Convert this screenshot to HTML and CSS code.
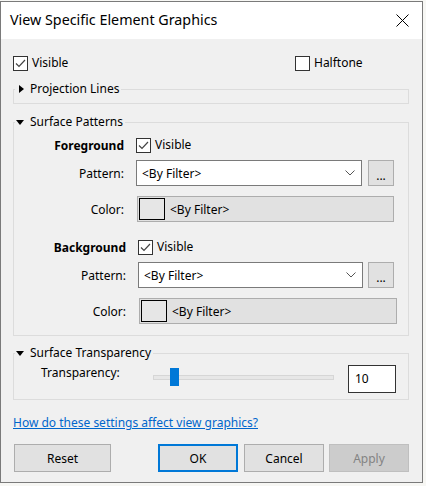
FILE: index.html
```html
<!DOCTYPE html>
<html>
<head>
<meta charset="utf-8">
<link rel="stylesheet" href="styles.css">
</head>
<body>
<div class="dialog">
  <div class="titlebar">
    <span class="title">View Specific Element Graphics</span>
    <svg class="close" width="13" height="13" viewBox="0 0 13 13"><path d="M0.5 0.5 L12.5 12.5 M12.5 0.5 L0.5 12.5" stroke="#000" stroke-width="1" fill="none"/></svg>
  </div>
  <div class="content">
    <div class="toprow">
      <label class="check"><span class="box"><svg width="13" height="13" viewBox="0 0 13 13"><path d="M2 6.5 L5 9.5 L11 3" stroke="#444" stroke-width="1.2" fill="none"/></svg></span>Visible</label>
      <label class="check"><span class="box"></span>Halftone</label>
    </div>

    <fieldset class="group collapsed">
      <legend><span class="tri"><span class="tri-right"></span></span>Projection Lines</legend>
    </fieldset>

    <fieldset class="group patterns">
      <legend><span class="tri"><span class="tri-down"></span></span>Surface Patterns</legend>
      <div class="section">
        <div class="row head">
          <span class="lbl bold">Foreground</span>
          <label class="check"><span class="box"><svg width="13" height="13" viewBox="0 0 13 13"><path d="M2 6.5 L5 9.5 L11 3" stroke="#444" stroke-width="1.2" fill="none"/></svg></span>Visible</label>
        </div>
        <div class="row pat">
          <span class="lbl">Pattern:</span>
          <div class="combo"><span>&lt;By Filter&gt;</span><svg width="10" height="6" viewBox="0 0 10 6"><path d="M0.5 0.5 L5 5 L9.5 0.5" stroke="#555" stroke-width="1" fill="none"/></svg></div>
          <button class="more">...</button>
        </div>
        <div class="row col">
          <span class="lbl">Color:</span>
          <div class="colorfield"><span class="swatch"></span><span>&lt;By Filter&gt;</span></div>
        </div>
      </div>
      <div class="section bgsec">
        <div class="row head">
          <span class="lbl bold">Background</span>
          <label class="check"><span class="box"><svg width="13" height="13" viewBox="0 0 13 13"><path d="M2 6.5 L5 9.5 L11 3" stroke="#444" stroke-width="1.2" fill="none"/></svg></span>Visible</label>
        </div>
        <div class="row pat">
          <span class="lbl">Pattern:</span>
          <div class="combo"><span>&lt;By Filter&gt;</span><svg width="10" height="6" viewBox="0 0 10 6"><path d="M0.5 0.5 L5 5 L9.5 0.5" stroke="#555" stroke-width="1" fill="none"/></svg></div>
          <button class="more">...</button>
        </div>
        <div class="row col">
          <span class="lbl">Color:</span>
          <div class="colorfield"><span class="swatch"></span><span>&lt;By Filter&gt;</span></div>
        </div>
      </div>
    </fieldset>

    <fieldset class="group trans">
      <legend><span class="tri"><span class="tri-down"></span></span>Surface Transparency</legend>
      <div class="transrow">
        <span class="tlbl">Transparency:</span>
        <div class="slider"><div class="track"></div><div class="thumb"></div></div>
        <div class="num">10</div>
      </div>
    </fieldset>

    <a class="help" href="#">How do these settings affect view graphics?</a>

    <div class="buttons">
      <button class="btn reset">Reset</button>
      <button class="btn ok">OK</button>
      <button class="btn cancel">Cancel</button>
      <button class="btn apply" disabled>Apply</button>
    </div>
  </div>
</div>
</body>
</html>
```

FILE: styles.css
```css
html, body {
  margin: 0;
  padding: 0;
  background: #f7f7f4;
}
body {
  padding-top: 1px;
  font-family: "Noto Sans", "Liberation Sans", sans-serif;
  font-size: 12px;
  color: #000;
}
.dialog {
  width: 421px;
  height: 480px;
  border: 1px solid #7a7a7a;
  background: #f0f0f0;
  display: flex;
  flex-direction: column;
}
.titlebar {
  height: 37px;
  background: #fff;
  display: flex;
  align-items: center;
  justify-content: space-between;
  padding: 0 13px 0 9px;
}
.title {
  font-size: 14.3px;
  line-height: 20px;
  margin-top: -2px;
}
.close {
  display: block;
  margin-top: -1px;
}
.content {
  flex: 1;
  padding: 0 13px 0 12px;
  display: flex;
  flex-direction: column;
}
.toprow {
  margin-top: 16px;
  display: grid;
  grid-template-columns: 282px auto;
  height: 16px;
}
.check {
  display: flex;
  align-items: center;
  gap: 4px;
  line-height: 16px;
  height: 16px;
}
.box {
  width: 13px;
  height: 13px;
  border: 1px solid #333;
  background: #fff;
  display: flex;
  align-items: center;
  justify-content: center;
  flex: none;
}
.box svg {
  display: block;
}
.group {
  margin: 10px 0 0 0;
  padding: 0 0 0 0;
  border: 1px solid #dcdcdc;
  min-width: 0;
}
.group legend {
  margin-left: 1px;
  padding: 0 2px 0 0;
  line-height: 16px;
  display: flex;
  align-items: center;
}
.tri {
  width: 9px;
  height: 9px;
  margin-right: 6px;
  display: flex;
  align-items: center;
  justify-content: center;
}
.tri-right {
  width: 0;
  height: 0;
  border-top: 4.5px solid transparent;
  border-bottom: 4.5px solid transparent;
  border-left: 5px solid #000;
  margin-left: 4px;
}
.tri-down {
  width: 0;
  height: 0;
  border-left: 4.5px solid transparent;
  border-right: 4.5px solid transparent;
  border-top: 5px solid #000;
  margin-top: 1px;
}
.collapsed {
  padding-bottom: 6px;
}
.patterns {
  padding-top: 7px;
  padding-bottom: 11px;
}
.section {
  display: flex;
  flex-direction: column;
}
.bgsec {
  margin-top: 17px;
  padding-left: 2px;
}
.row {
  display: flex;
  align-items: center;
}
.lbl {
  width: 110px;
  text-align: right;
  margin-right: 12px;
  flex: none;
}
.bold {
  font-weight: bold;
}
.row.head {
  height: 16px;
}
.row.pat {
  margin-top: 7px;
  height: 26px;
}
.row.col {
  margin-top: 10px;
  height: 26px;
}
.combo {
  box-sizing: border-box;
  width: 226px;
  height: 26px;
  background: #fff;
  border: 1px solid #7a7a7a;
  display: flex;
  align-items: center;
  justify-content: space-between;
  padding: 0 6px 0 5px;
}
.combo svg {
  display: block;
}
.bgsec .combo {
  width: 225px;
}
.more {
  box-sizing: border-box;
  width: 26px;
  height: 26px;
  margin-left: 6px;
  background: #e1e1e1;
  border: 1px solid #adadad;
  font-family: inherit;
  font-size: 12px;
  padding: 5px 0 0 0;
  line-height: 16px;
  color: #000;
}
.bgsec .more {
  margin-left: 5px;
}
.colorfield {
  box-sizing: border-box;
  margin-left: 1px;
  width: 257px;
  height: 26px;
  background: #e1e1e1;
  border: 1px solid #adadad;
  display: flex;
  align-items: center;
  padding-left: 1px;
  gap: 5px;
}
.bgsec .colorfield {
  width: 258px;
}
.swatch {
  box-sizing: border-box;
  width: 26px;
  height: 22px;
  border: 1px solid #000;
  background: #e6e6e6;
}
.trans {
  margin-top: 9px;
  padding: 4px 0 6px 0;
}
.transrow {
  display: flex;
  align-items: flex-start;
}
.tlbl {
  margin-left: 27px;
  width: 112px;
  line-height: 16px;
}
.slider {
  position: relative;
  width: 181px;
  height: 18px;
  margin-top: 3px;
  display: flex;
  align-items: center;
}
.track {
  box-sizing: border-box;
  width: 100%;
  height: 5px;
  background: #e7e7e7;
  border: 1px solid #d6d6d6;
}
.thumb {
  position: absolute;
  left: 17px;
  top: 0;
  width: 9px;
  height: 18px;
  background: #0078d7;
}
.num {
  box-sizing: border-box;
  margin-left: 14px;
  width: 48px;
  height: 28px;
  background: #fff;
  border: 1px solid #333;
  line-height: 26px;
  padding-left: 6px;
}
.help {
  margin-top: 15px;
  line-height: 16px;
  color: #0066cc;
  text-decoration: underline;
  align-self: flex-start;
}
.buttons {
  margin-top: 13px;
  display: flex;
}
.btn {
  box-sizing: border-box;
  height: 28px;
  width: 80px;
  background: #e1e1e1;
  border: 1px solid #adadad;
  font-family: inherit;
  font-size: 12px;
  color: #000;
  padding: 0;
}
.reset {
  margin-left: 1px;
  width: 97px;
}
.ok {
  margin-left: 47px;
  border: 2px solid #0078d7;
}
.cancel {
  margin-left: 6px;
}
.apply {
  margin-left: 5px;
  background: #cccccc;
  border-color: #bfbfbf;
  color: #838383;
}
```
